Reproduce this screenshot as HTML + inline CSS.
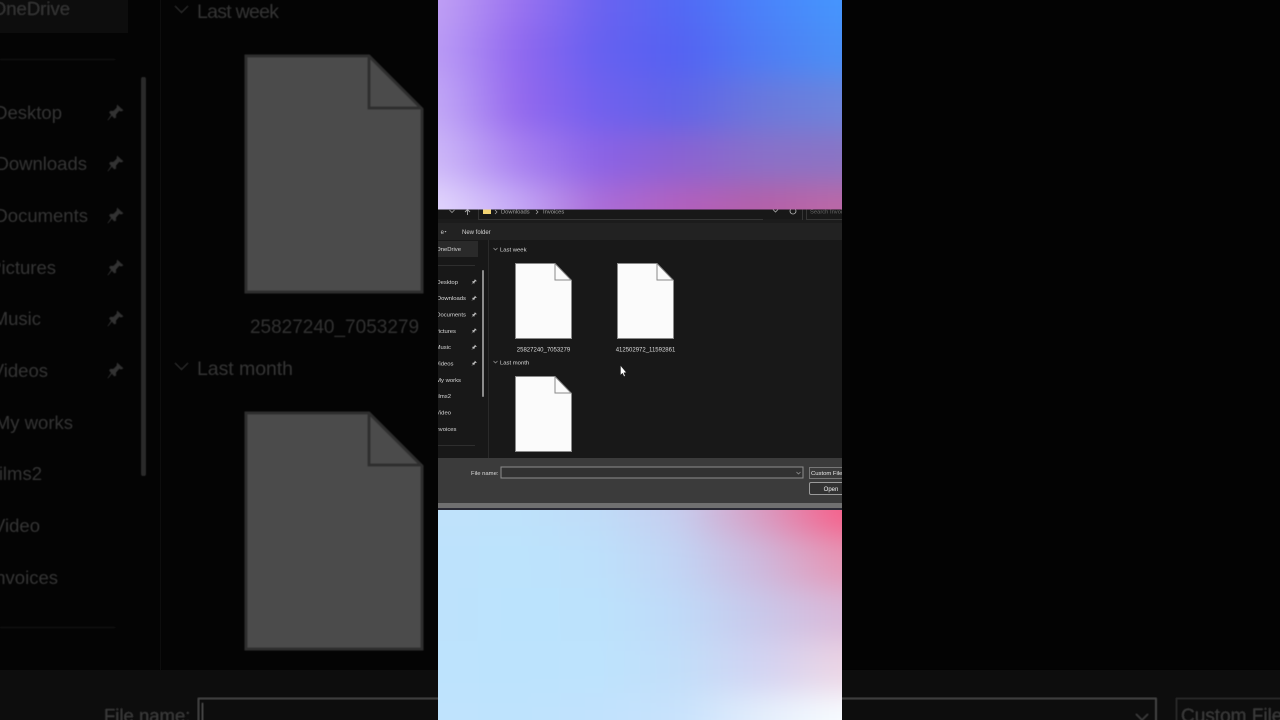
<!DOCTYPE html>
<html lang="en">
<head>
<meta charset="utf-8">
<title>Invoices</title>
<style>
html,body{margin:0;padding:0;width:1280px;height:720px;overflow:hidden;background:#030303}
.g{position:absolute;left:438px;width:404px;overflow:hidden}
#top{top:0;height:210px}
#bot{top:510px;height:210px}
.m{position:absolute;left:-100px;top:-100px;width:604px;height:410px;filter:blur(15px)}
.m div{position:absolute;left:0;width:604px}
svg{position:absolute;left:0;top:0}
text{font-family:"Liberation Sans",sans-serif}
</style>
</head>
<body>
<div class="g" id="top"><div class="m">
<div style="top:0;height:126px;background:linear-gradient(90deg,#c0a0f4 100px,#9a72f0 181px,#6a62f0 262px,#5268f4 342px,#4a82fa 423px,#4596fd 504px)"></div>
<div style="top:126px;height:52px;background:linear-gradient(90deg,#bb9cf5 100px,#9168ef 181px,#6660f0 262px,#5462f2 342px,#4e7cf4 423px,#4a90f6 504px)"></div>
<div style="top:178px;height:53px;background:linear-gradient(90deg,#c2a8f6 100px,#9468ee 181px,#7060ee 262px,#6064e8 342px,#6a78dc 423px,#6c84dc 504px)"></div>
<div style="top:231px;height:52px;background:linear-gradient(90deg,#cdb8f8 100px,#a880f0 181px,#8a62e6 262px,#8a62d2 342px,#8a70c8 423px,#8a74c4 504px)"></div>
<div style="top:283px;height:127px;background:linear-gradient(90deg,#e2d6fd 100px,#c4a8f6 181px,#aa6cd8 262px,#b260be 342px,#b460a8 423px,#bc68a6 504px)"></div>
</div></div>
<div class="g" id="bot"><div class="m">
<div style="top:0;height:126px;background:linear-gradient(90deg,#bfe2fb 100px,#bee2fb 181px,#bfdcf8 262px,#c6cdee 342px,#d89cc2 423px,#f6608a 504px)"></div>
<div style="top:126px;height:52px;background:linear-gradient(90deg,#bde2fc 100px,#bce3fc 181px,#bde0fb 262px,#c2d4f4 342px,#ceb8dc 423px,#e695b4 504px)"></div>
<div style="top:178px;height:53px;background:linear-gradient(90deg,#bde2fc 100px,#bbe3fd 181px,#bce2fc 262px,#c0daf8 342px,#c9c8ea 423px,#dab8d8 504px)"></div>
<div style="top:231px;height:52px;background:linear-gradient(90deg,#bde3fd 100px,#bce3fd 181px,#bde3fd 262px,#c2def9 342px,#d2d3f2 423px,#ecd4e4 504px)"></div>
<div style="top:283px;height:127px;background:linear-gradient(90deg,#bfe3fd 100px,#bee3fd 181px,#c1e2fd 262px,#c8e2fc 342px,#e4eefc 423px,#f8fcff 504px)"></div>
</div></div>
<svg width="1280" height="720" viewBox="0 0 1280 720" xmlns="http://www.w3.org/2000/svg">
<defs>
<clipPath id="cl"><rect x="0" y="0" width="438" height="720"/></clipPath>
<clipPath id="cr"><rect x="842" y="0" width="438" height="720"/></clipPath>
<clipPath id="cc"><rect x="438" y="209.500" width="404" height="300.500"/></clipPath>
<filter id="b1" filterUnits="userSpaceOnUse" x="-20" y="-20" width="1320" height="760"><feGaussianBlur stdDeviation=".55"/></filter>
<filter id="b2" filterUnits="userSpaceOnUse" x="420" y="190" width="440" height="340"><feGaussianBlur stdDeviation=".28"/></filter>
<symbol id="pin" viewBox="0 0 16 16" overflow="visible">
<path d="M9.5 0.5 L15.5 6 L13.5 7 L11.5 6.5 L8.5 10 L8.5 13 L6.8 13.5 L4.6 11 L1 15.5 L0.5 15 L3.8 10.2 L2 8 L3 6.5 L6 6.5 L9 3.5 Z" fill="currentColor"/>
</symbol>
</defs>

<!-- left dimmed -->
<g clip-path="url(#cl)">
<rect x="0" y="0" width="438" height="720" fill="#040404"/>
<g filter="url(#b1)">
<rect x="-10" y="-10" width="138" height="43" fill="#0c0c0c"/>
<rect x="0" y="59" width="115" height="1" fill="#131313"/>
<rect x="0" y="627" width="115" height="1" fill="#131313"/>
<rect x="141" y="77" width="5" height="399" rx="2" fill="#2a2a2a"/>
<rect x="160" y="-10" width="1" height="680" fill="#0d0d0d"/>
<g font-size="18.500" fill="#353535" text-anchor="end">
<text x="70" y="15">OneDrive</text>
<text x="62" y="119">Desktop</text>
<text x="87" y="170">Downloads</text>
<text x="88" y="222">Documents</text>
<text x="56" y="274">Pictures</text>
<text x="41" y="325">Music</text>
<text x="48" y="377">Videos</text>
<text x="73" y="429">My works</text>
<text x="42" y="480">Films2</text>
<text x="40" y="532">Video</text>
<text x="58" y="584">Invoices</text>
</g>
<g color="#303030">
<use href="#pin" x="107" y="104" width="17" height="17"/>
<use href="#pin" x="107" y="155" width="17" height="17"/>
<use href="#pin" x="107" y="207" width="17" height="17"/>
<use href="#pin" x="107" y="259" width="17" height="17"/>
<use href="#pin" x="107" y="310" width="17" height="17"/>
<use href="#pin" x="107" y="362" width="17" height="17"/>
</g>
<path d="M175 6 L181.500 12.500 L188 6" fill="none" stroke="#2a2a2a" stroke-width="1.500"/>
<path d="M175 363 L181.500 369.500 L188 363" fill="none" stroke="#2a2a2a" stroke-width="1.500"/>
<text x="197" y="18" font-size="19.500" fill="#353535" textLength="82">Last week</text>
<text x="197" y="375" font-size="19.500" fill="#353535" textLength="96">Last month</text>
<path d="M246 56 H369 L422 109 V292 H246 Z" fill="#4b4b4b" stroke="#2f2f2f" stroke-width="3"/>
<path d="M369 56 V108 H422" fill="none" stroke="#2f2f2f" stroke-width="3"/>
<path d="M246 413 H369 L422 466 V649 H246 Z" fill="#4b4b4b" stroke="#2f2f2f" stroke-width="3"/>
<path d="M369 413 V465 H422" fill="none" stroke="#2f2f2f" stroke-width="3"/>
<text x="334.500" y="333" font-size="19" fill="#323232" text-anchor="middle">25827240_7053279</text>
<rect x="-10" y="670" width="460" height="60" fill="#101010"/>
<text x="104" y="722" font-size="18.500" fill="#3a3a3a">File name:</text>
<path d="M198.500 730 V698.500 H450" fill="none" stroke="#4a4a4a" stroke-width="1.500"/>
<rect x="202" y="703" width="1" height="27" fill="#555"/>
</g>
</g>

<!-- right dimmed -->
<g clip-path="url(#cr)">
<rect x="842" y="0" width="438" height="720" fill="#030303"/>
<g filter="url(#b1)">
<rect x="830" y="670" width="470" height="60" fill="#101010"/>
<path d="M830 698.500 H1156 V730" fill="none" stroke="#4a4a4a" stroke-width="1.500"/>
<path d="M1136 714 L1142 720 L1148 714" fill="none" stroke="#3c3c3c" stroke-width="1.500"/>
<path d="M1176.500 730 V698.500 H1300" fill="none" stroke="#2b2b2b" stroke-width="1.500"/>
<text x="1181" y="722" font-size="19" fill="#3a3a3a">Custom File</text>
</g>
</g>

<!-- center dialog -->
<g clip-path="url(#cc)">
<rect x="438" y="209" width="404" height="301" fill="#181818"/>
<g filter="url(#b2)">
<rect x="438" y="219" width="404" height="4" fill="#1b1b1b"/>
<rect x="430" y="223" width="420" height="17" fill="#202020"/>
<rect x="478" y="219" width="285" height="1" fill="#343434"/>
<rect x="478" y="205" width="1" height="15" fill="#303030"/>
<rect x="802" y="205" width="1" height="15" fill="#343434"/>
<path d="M806.500 205 V219.500 H850" fill="none" stroke="#343434"/>
<path d="M449.500 210 L452 212.500 L454.500 210" fill="none" stroke="#9a9a9a" stroke-width=".8"/>
<path d="M467.500 215 V210 M465 212 L467.500 209.500 L470 212" fill="none" stroke="#aaa" stroke-width=".9"/>
<rect x="483" y="206" width="8" height="8" fill="#f2d373"/>
<path d="M495 210 L497 212 L495 214" fill="none" stroke="#aaa" stroke-width=".7"/>
<text x="501" y="213.500" font-size="5.800" fill="#a0a0a0">Downloads</text>
<path d="M536 210 L538 212 L536 214" fill="none" stroke="#aaa" stroke-width=".7"/>
<text x="543" y="213.500" font-size="5.800" fill="#a0a0a0">Invoices</text>
<path d="M773 209.500 L775.500 212 L778 209.500" fill="none" stroke="#aaa" stroke-width=".8"/>
<circle cx="793" cy="211" r="3" fill="none" stroke="#bbb" stroke-width=".8"/>
<text x="810" y="213.500" font-size="5.800" fill="#666">Search Invoices</text>

<text x="444" y="234" font-size="6" fill="#ccc" text-anchor="end">e</text>
<path d="M444.500 231 L446.500 231 L445.500 232.500 Z" fill="#bbb"/>
<text x="462" y="234" font-size="6" fill="#d4d4d4">New folder</text>

<rect x="430" y="241" width="48" height="16" fill="#2b2b2b"/>
<rect x="430" y="265" width="45" height="1" fill="#2e2e2e"/>
<rect x="430" y="445" width="45" height="1" fill="#2e2e2e"/>
<rect x="482" y="270" width="2" height="127" rx="1" fill="#8c8c8c"/>
<rect x="488" y="240" width="1" height="218" fill="#2a2a2a"/>
<g font-size="5.900" fill="#d6d6d6" text-anchor="end">
<text x="461" y="251">OneDrive</text>
<text x="458" y="284">Desktop</text>
<text x="466" y="300">Downloads</text>
<text x="466" y="316.500">Documents</text>
<text x="456" y="333">Pictures</text>
<text x="451" y="349">Music</text>
<text x="453.500" y="365.500">Videos</text>
<text x="461" y="382">My works</text>
<text x="451" y="398">Films2</text>
<text x="451" y="414.500">Video</text>
<text x="456.500" y="431">Invoices</text>
</g>
<g color="#c0c0c0">
<use href="#pin" x="471.500" y="279" width="5.500" height="5.500"/>
<use href="#pin" x="471.500" y="295.500" width="5.500" height="5.500"/>
<use href="#pin" x="471.500" y="312" width="5.500" height="5.500"/>
<use href="#pin" x="471.500" y="328" width="5.500" height="5.500"/>
<use href="#pin" x="471.500" y="344.500" width="5.500" height="5.500"/>
<use href="#pin" x="471.500" y="360.500" width="5.500" height="5.500"/>
</g>
<path d="M493.500 248 L495.500 250 L497.500 248" fill="none" stroke="#999" stroke-width=".7"/>
<path d="M493.500 361 L495.500 363 L497.500 361" fill="none" stroke="#999" stroke-width=".7"/>
<text x="500" y="251.500" font-size="5.900" fill="#d8d8d8">Last week</text>
<text x="500" y="364.500" font-size="5.900" fill="#d8d8d8">Last month</text>

<path d="M515.500 263.500 H555 L571.500 280.500 V338.500 H515.500 Z" fill="#fbfbfb" stroke="#8a8a8a"/>
<path d="M555 263.500 V280 H571.500" fill="none" stroke="#8a8a8a"/>
<path d="M617.500 263.500 H657 L673.500 280.500 V338.500 H617.500 Z" fill="#fbfbfb" stroke="#8a8a8a"/>
<path d="M657 263.500 V280 H673.500" fill="none" stroke="#8a8a8a"/>
<path d="M515.500 376.500 H555 L571.500 393.500 V451.500 H515.500 Z" fill="#fbfbfb" stroke="#8a8a8a"/>
<path d="M555 376.500 V393 H571.500" fill="none" stroke="#8a8a8a"/>
<text x="543.500" y="351.500" font-size="6" fill="#dadada" text-anchor="middle">25827240_7053279</text>
<text x="645.500" y="351.500" font-size="6" fill="#dadada" text-anchor="middle">412502972_11592861</text>

<path d="M620.500 365.500 V375 L622.500 373.200 L624 376.500 L625.200 376 L623.800 372.800 L626.300 372.500 Z" fill="#fff" stroke="#222" stroke-width=".4"/>

<rect x="430" y="458" width="420" height="45" fill="#3b3b3b"/>
<rect x="430" y="503" width="420" height="5" fill="#6f6f6f"/>
<rect x="430" y="508" width="420" height="2" fill="#2a2a34"/>
<text x="471" y="475" font-size="5.900" fill="#dcdcdc">File name:</text>
<rect x="501" y="467" width="302" height="11" fill="#333" stroke="#8e8e8e"/>
<path d="M796.500 472 L798.500 474 L800.500 472" fill="none" stroke="#999" stroke-width=".7"/>
<path d="M850 467.500 H809.500 V478.500 H850" fill="#3a3a3a" stroke="#777"/>
<text x="811" y="475" font-size="5.900" fill="#e8e8e8">Custom File</text>
<rect x="809.500" y="482.500" width="50" height="12" rx="1.500" fill="#333" stroke="#9a9a9a"/>
<text x="831" y="491" font-size="6" fill="#eee" text-anchor="middle">Open</text>
</g>
</g>
</svg>
</body>
</html>
